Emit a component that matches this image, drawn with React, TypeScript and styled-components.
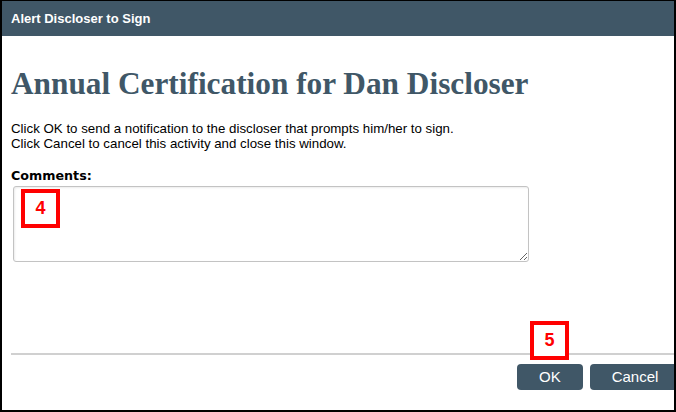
import * as React from "react";
import styled, { createGlobalStyle } from "styled-components";

const GlobalStyle = createGlobalStyle`
  html, body {
    margin: 0;
    padding: 0;
    background: #ffffff;
  }
`;

const Frame = styled.div`
  position: relative;
  box-sizing: border-box;
  width: 676px;
  height: 412px;
  border: 2px solid #000;
  border-top-width: 1px;
  overflow: hidden;
  background: #fff;
  font-family: "Liberation Sans", Arial, sans-serif;
  color: #000;
`;

const Header = styled.div`
  display: flex;
  align-items: center;
  height: 35px;
  padding-left: 9px;
  background: #405767;
  color: #fff;
  font-size: 13px;
  font-weight: bold;
`;

const Body = styled.div`
  padding: 0 0 0 9px;
`;

const Title = styled.h1`
  margin: 30px 0 0;
  font-family: "Liberation Serif", "Times New Roman", serif;
  font-size: 31.3px;
  line-height: 36px;
  font-weight: bold;
  color: #405767;
`;

const Intro = styled.p`
  margin: 19px 0 0;
  font-size: 13.3px;
  line-height: 15px;
`;

const Label = styled.div`
  margin-top: 17px;
  font-family: "DejaVu Sans", Verdana, sans-serif;
  font-size: 12.7px;
  line-height: 15px;
  font-weight: bold;
`;

const FieldWrap = styled.div`
  position: relative;
  margin: 3px 0 0 2px;
  width: 516px;
`;

const Comments = styled.textarea`
  display: block;
  box-sizing: border-box;
  width: 516px;
  height: 76px;
  margin: 0;
  padding: 4px;
  border: 1px solid #c3c3c3;
  border-radius: 3px;
  box-shadow: inset 1px 1px 2px rgba(0, 0, 0, 0.08);
  font-family: "Liberation Sans", Arial, sans-serif;
  font-size: 13px;
  outline: none;
`;

const Marker = styled.div<{ $left: number; $top: number }>`
  position: absolute;
  left: ${(p) => p.$left}px;
  top: ${(p) => p.$top}px;
  box-sizing: border-box;
  width: 39px;
  height: 39px;
  border: 4px solid #ff0000;
  background: #fff;
  display: flex;
  align-items: center;
  justify-content: center;
  color: #ff0000;
  font-size: 18px;
  font-weight: bold;
`;

const Divider = styled.div`
  margin-top: 91px;
  height: 2px;
  background: #d0d0d0;
`;

const ButtonRow = styled.div`
  display: flex;
  gap: 7px;
  margin-top: 9px;
  padding-left: 506px;
`;

const Slot = styled.div`
  position: relative;
  flex: none;
`;

const Button = styled.button`
  box-sizing: border-box;
  height: 26px;
  padding: 0 22px;
  border: none;
  border-radius: 4px;
  background: #405767;
  color: #fff;
  font-family: "Liberation Sans", Arial, sans-serif;
  font-size: 15px;
  line-height: 26px;
  white-space: nowrap;
`;

export default function App() {
  return (
    <>
      <GlobalStyle />
      <Frame>
        <Header>Alert Discloser to Sign</Header>
        <Body>
          <Title>Annual Certification for Dan Discloser</Title>
          <Intro>
            Click OK to send a notification to the discloser that prompts him/her to sign.
            <br />
            Click Cancel to cancel this activity and close this window.
          </Intro>
          <Label>Comments:</Label>
          <FieldWrap>
            <Comments />
            <Marker $left={8} $top={3}>4</Marker>
          </FieldWrap>
          <Divider />
          <ButtonRow>
            <Slot>
              <Button>OK</Button>
              <Marker $left={13} $top={-43}>5</Marker>
            </Slot>
            <Slot>
              <Button>Cancel</Button>
            </Slot>
          </ButtonRow>
        </Body>
      </Frame>
    </>
  );
}
